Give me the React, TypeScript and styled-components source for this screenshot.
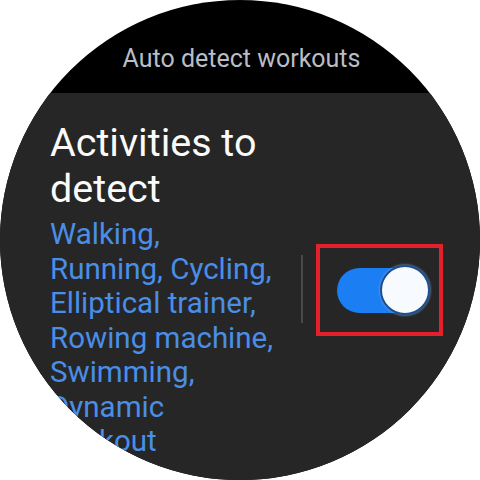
import React from "react";
import styled, { createGlobalStyle } from "styled-components";

const Global = createGlobalStyle`
  html, body { margin: 0; padding: 0; background: #ffffff; }
  body { font-family: Roboto, "Noto Sans", sans-serif; }
`;

const Watch = styled.div`
  width: 480px;
  height: 480px;
  border-radius: 50%;
  background: #000000;
  overflow: hidden;
  display: flex;
  flex-direction: column;
`;

const Header = styled.div`
  height: 93px;
  box-sizing: border-box;
  padding-top: 44px;
  text-align: center;
  font-size: 25px;
  line-height: 29px;
  color: #b9bdc6;
  padding-left: 3px;
`;

const Card = styled.div`
  flex: 1;
  background: #262626;
  border-radius: 26px 26px 0 0;
  padding: 27px 0 0 50px;
`;

const Title = styled.div`
  font-size: 39.5px;
  line-height: 46px;
  color: #fafafa;
`;

const Row = styled.div`
  display: flex;
  align-items: flex-start;
  margin-top: 5px;
`;

const List = styled.div`
  width: 251px;
  font-size: 29.5px;
  line-height: 34.5px;
  color: #4a8ee6;
`;

const Line = styled.span`
  display: block;
  white-space: nowrap;
`;

const Divider = styled.div`
  width: 2px;
  height: 68px;
  margin-top: 38px;
  background: #4a4a4a;
`;

const Highlight = styled.div`
  margin: 27px 0 0 13px;
  width: 127px;
  height: 92px;
  box-sizing: border-box;
  border: 4px solid #e3202b;
  display: flex;
  align-items: center;
  padding-left: 17px;
`;

const Switch = styled.div<{ $on: boolean }>`
  position: relative;
  width: 93px;
  height: 50px;
`;

const Track = styled.div<{ $on: boolean }>`
  position: absolute;
  left: 0;
  top: 3px;
  width: 86px;
  height: 45px;
  border-radius: 23px;
  background: ${(p) => (p.$on ? "#1b7ef3" : "#555555")};
`;

const Knob = styled.div<{ $on: boolean }>`
  position: absolute;
  top: 0;
  ${(p) => (p.$on ? "right: 0;" : "left: 0;")}
  width: 50px;
  height: 50px;
  box-sizing: border-box;
  border-radius: 50%;
  background: #f7faff;
  border: 2px solid #1d4f8f;
  box-shadow: 0 0 2px 1px rgba(120, 170, 240, 0.5);
`;

const lines = [
  "Walking,",
  "Running, Cycling,",
  "Elliptical trainer,",
  "Rowing machine,",
  "Swimming,",
  "Dynamic",
  "workout",
];

export default function App() {
  const on = true;
  return (
    <>
      <Global />
      <Watch>
        <Header>Auto detect workouts</Header>
        <Card>
          <Title>
            Activities to
            <br />
            detect
          </Title>
          <Row>
            <List>
              {lines.map((l) => (
                <Line key={l}>{l}</Line>
              ))}
            </List>
            <Divider />
            <Highlight>
              <Switch $on={on}>
                <Track $on={on} />
                <Knob $on={on} />
              </Switch>
            </Highlight>
          </Row>
        </Card>
      </Watch>
    </>
  );
}
